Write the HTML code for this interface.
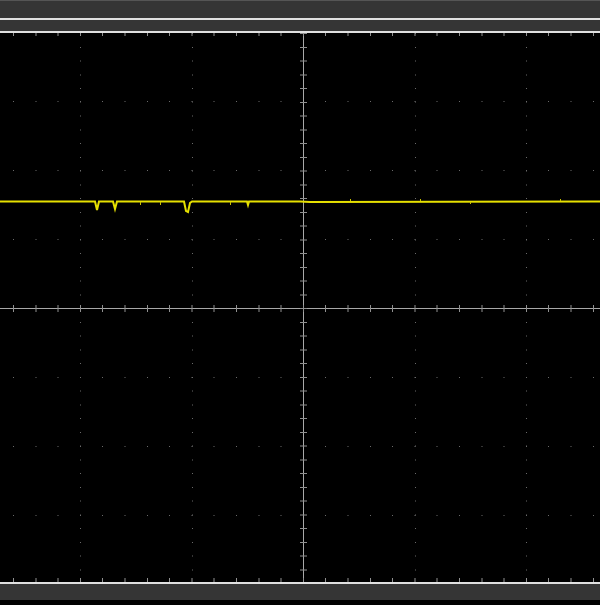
<!DOCTYPE html><html><head><style>html,body{margin:0;padding:0;background:#000;overflow:hidden}</style></head><body>
<svg width="600" height="600" viewBox="0 0 600 600" xmlns="http://www.w3.org/2000/svg" shape-rendering="crispEdges">
<rect width="600" height="600" fill="#000"/>
<rect x="0" y="0" width="600" height="18" fill="#353535"/>
<rect x="0" y="0" width="600" height="1" fill="#555"/>
<rect x="0" y="18" width="600" height="2" fill="#e0e0e0"/>
<rect x="0" y="20" width="600" height="11" fill="#353535"/>
<rect x="0" y="31" width="600" height="2" fill="#e0e0e0"/>
<rect x="0" y="582" width="600" height="2" fill="#e0e0e0"/>
<rect x="0" y="584" width="600" height="16" fill="#353535"/>
<g stroke="#6a6a6a" stroke-width="1" fill="none">
<g stroke-dasharray="1 21.3">
<line x1="13" y1="101.5" x2="600" y2="101.5"/>
<line x1="13" y1="170.5" x2="600" y2="170.5"/>
<line x1="13" y1="239.5" x2="600" y2="239.5"/>
<line x1="13" y1="377.5" x2="600" y2="377.5"/>
<line x1="13" y1="446.5" x2="600" y2="446.5"/>
<line x1="13" y1="515.5" x2="600" y2="515.5"/>
</g>
<g stroke-dasharray="1 12.75">
<line x1="80.5" y1="33" x2="80.5" y2="582"/>
<line x1="192.5" y1="33" x2="192.5" y2="582"/>
<line x1="415.5" y1="33" x2="415.5" y2="582"/>
<line x1="526.5" y1="33" x2="526.5" y2="582"/>
</g>
</g>
<g stroke="#a8a8a8" fill="none">
<line x1="0" y1="308.5" x2="600" y2="308.5"/>
<line x1="303.5" y1="33" x2="303.5" y2="582"/>
</g>
<g stroke="#909090" fill="none">
<line x1="13" y1="308.5" x2="600" y2="308.5" stroke-width="7" stroke-dasharray="1 21.3"/>
<line x1="303.5" y1="33" x2="303.5" y2="582" stroke-width="7" stroke-dasharray="1 12.75"/>
<line x1="13" y1="34.5" x2="600" y2="34.5" stroke-width="3" stroke-dasharray="1 21.3"/>
<line x1="13" y1="580" x2="600" y2="580" stroke-width="4" stroke-dasharray="1 21.3"/>
</g>
<polyline fill="none" stroke="#e6e000" stroke-width="2" shape-rendering="auto" points="0,201.5 95,201.5 97,210 99,201.5 113,201.5 115,209 117,201.5 184,201.5 186,211 188,212 190,203 192,201.5 247,201.5 248,205 249,201.5 300,201.5 310,202 600,201.5"/>
<g stroke="#c8c000" stroke-width="1" shape-rendering="crispEdges">
<line x1="140.5" y1="202" x2="140.5" y2="205"/><line x1="160.5" y1="202" x2="160.5" y2="205"/><line x1="230.5" y1="202" x2="230.5" y2="205"/><line x1="350.5" y1="199" x2="350.5" y2="201"/><line x1="420.5" y1="199" x2="420.5" y2="201"/><line x1="470.5" y1="202" x2="470.5" y2="204"/><line x1="560.5" y1="199" x2="560.5" y2="201"/>
</g>
</svg>
</body></html>
